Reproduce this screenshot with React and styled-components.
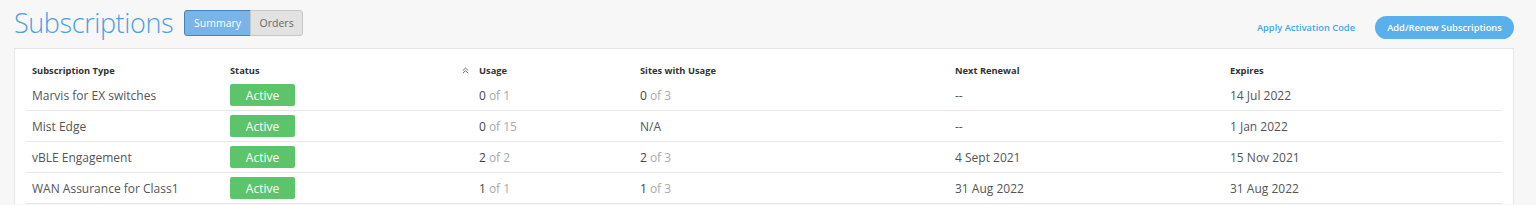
import React from "react";
import styled, { createGlobalStyle } from "styled-components";

const GlobalStyle = createGlobalStyle`
  html, body {
    margin: 0;
    padding: 0;
    background: #f7f7f7;
    font-family: "Open Sans", "Liberation Sans", sans-serif;
  }
`;

const Page = styled.div`
  padding: 0 22px 0 14px;
`;

const TopBar = styled.div`
  display: flex;
  justify-content: space-between;
  align-items: flex-start;
  height: 48px;
`;

const TitleGroup = styled.div`
  display: flex;
  align-items: center;
  gap: 11px;
  padding-top: 10px;
`;

const Title = styled.h1`
  margin: 0;
  font-size: 27px;
  font-weight: 300;
  letter-spacing: -0.4px;
  color: #4b9fe1;
  line-height: 26px;
`;

const Toggle = styled.div`
  display: flex;
`;

const ToggleButton = styled.button`
  height: 26px;
  width: ${(p) => (p.$active ? "67px" : "53px")};
  padding: 0;
  font-family: inherit;
  font-size: 10.5px;
  border: 1px solid ${(p) => (p.$active ? "#4a80b8" : "#c6c6c6")};
  background: ${(p) => (p.$active ? "#78b4e7" : "#e2e2e2")};
  color: ${(p) => (p.$active ? "#fff" : "#666")};
  border-radius: ${(p) => (p.$first ? "3px 0 0 3px" : "0 3px 3px 0")};
  margin-left: ${(p) => (p.$first ? "0" : "-1px")};
  cursor: pointer;
`;

const Actions = styled.div`
  display: flex;
  align-items: center;
  gap: 20px;
  padding-top: 16px;
`;

const LinkButton = styled.a`
  font-size: 9.3px;
  font-weight: 600;
  color: #45a5e8;
  text-decoration: none;
`;

const PrimaryButton = styled.button`
  height: 23px;
  width: 139px;
  padding: 0;
  border: none;
  border-radius: 12px;
  background: #58b1ec;
  color: #fff;
  font-family: inherit;
  font-size: 9.3px;
  font-weight: 600;
  white-space: nowrap;
`;

const Panel = styled.div`
  background: #fff;
  border: 1px solid #e6e6e6;
  border-bottom: none;
  padding: 12px 11px 0 11px;
`;

const Grid = styled.div`
  display: grid;
  grid-template-columns: 198px 249px 161px 315px 275px 1fr;
`;

const HeadCell = styled.div`
  height: 19px;
  display: flex;
  align-items: center;
  padding-left: 6px;
  font-size: 9.3px;
  font-weight: 700;
  color: #333;
`;

const SortIcon = styled.svg`
  width: 7px;
  height: 7px;
  margin-left: -17px;
  margin-right: 10px;
`;

const Cell = styled.div`
  height: 30px;
  display: flex;
  align-items: center;
  padding-left: 6px;
  font-size: 12px;
  color: #555;
  border-bottom: 1px solid #e8e8e8;
`;

const Badge = styled.span`
  display: inline-flex;
  align-items: center;
  justify-content: center;
  width: 65px;
  height: 22px;
  border-radius: 2px;
  background: #5cc46a;
  color: #fff;
  font-size: 12px;
`;

const Count = styled.span`
  color: #444;
`;

const Total = styled.span`
  color: #aaa;
  margin-left: 3px;
`;

const rows = [
  { type: "Marvis for EX switches", usage: [0, 1], sites: [0, 3], renewal: "--", expires: "14 Jul 2022" },
  { type: "Mist Edge", usage: [0, 15], sites: null, renewal: "--", expires: "1 Jan 2022" },
  { type: "vBLE Engagement", usage: [2, 2], sites: [2, 3], renewal: "4 Sept 2021", expires: "15 Nov 2021" },
  { type: "WAN Assurance for Class1", usage: [1, 1], sites: [1, 3], renewal: "31 Aug 2022", expires: "31 Aug 2022" },
];

const Of = ({ pair }) =>
  pair ? (
    <>
      <Count>{pair[0]}</Count>
      <Total>of {pair[1]}</Total>
    </>
  ) : (
    "N/A"
  );

export default function App() {
  return (
    <>
      <GlobalStyle />
      <Page>
        <TopBar>
          <TitleGroup>
            <Title>Subscriptions</Title>
            <Toggle>
              <ToggleButton $active $first>Summary</ToggleButton>
              <ToggleButton>Orders</ToggleButton>
            </Toggle>
          </TitleGroup>
          <Actions>
            <LinkButton href="#">Apply Activation Code</LinkButton>
            <PrimaryButton>Add/Renew Subscriptions</PrimaryButton>
          </Actions>
        </TopBar>
        <Panel>
          <Grid>
            <HeadCell>Subscription Type</HeadCell>
            <HeadCell>Status</HeadCell>
            <HeadCell>
              <SortIcon viewBox="0 0 8 8">
                <path d="M1 4 L4 1.2 L7 4 M1 7 L4 4.2 L7 7" fill="none" stroke="#666" strokeWidth="1.1" />
              </SortIcon>
              Usage
            </HeadCell>
            <HeadCell>Sites with Usage</HeadCell>
            <HeadCell>Next Renewal</HeadCell>
            <HeadCell>Expires</HeadCell>
            {rows.map((r) => (
              <React.Fragment key={r.type}>
                <Cell>{r.type}</Cell>
                <Cell>
                  <Badge>Active</Badge>
                </Cell>
                <Cell>
                  <Of pair={r.usage} />
                </Cell>
                <Cell>
                  <Of pair={r.sites} />
                </Cell>
                <Cell>{r.renewal}</Cell>
                <Cell>{r.expires}</Cell>
              </React.Fragment>
            ))}
          </Grid>
        </Panel>
      </Page>
    </>
  );
}
